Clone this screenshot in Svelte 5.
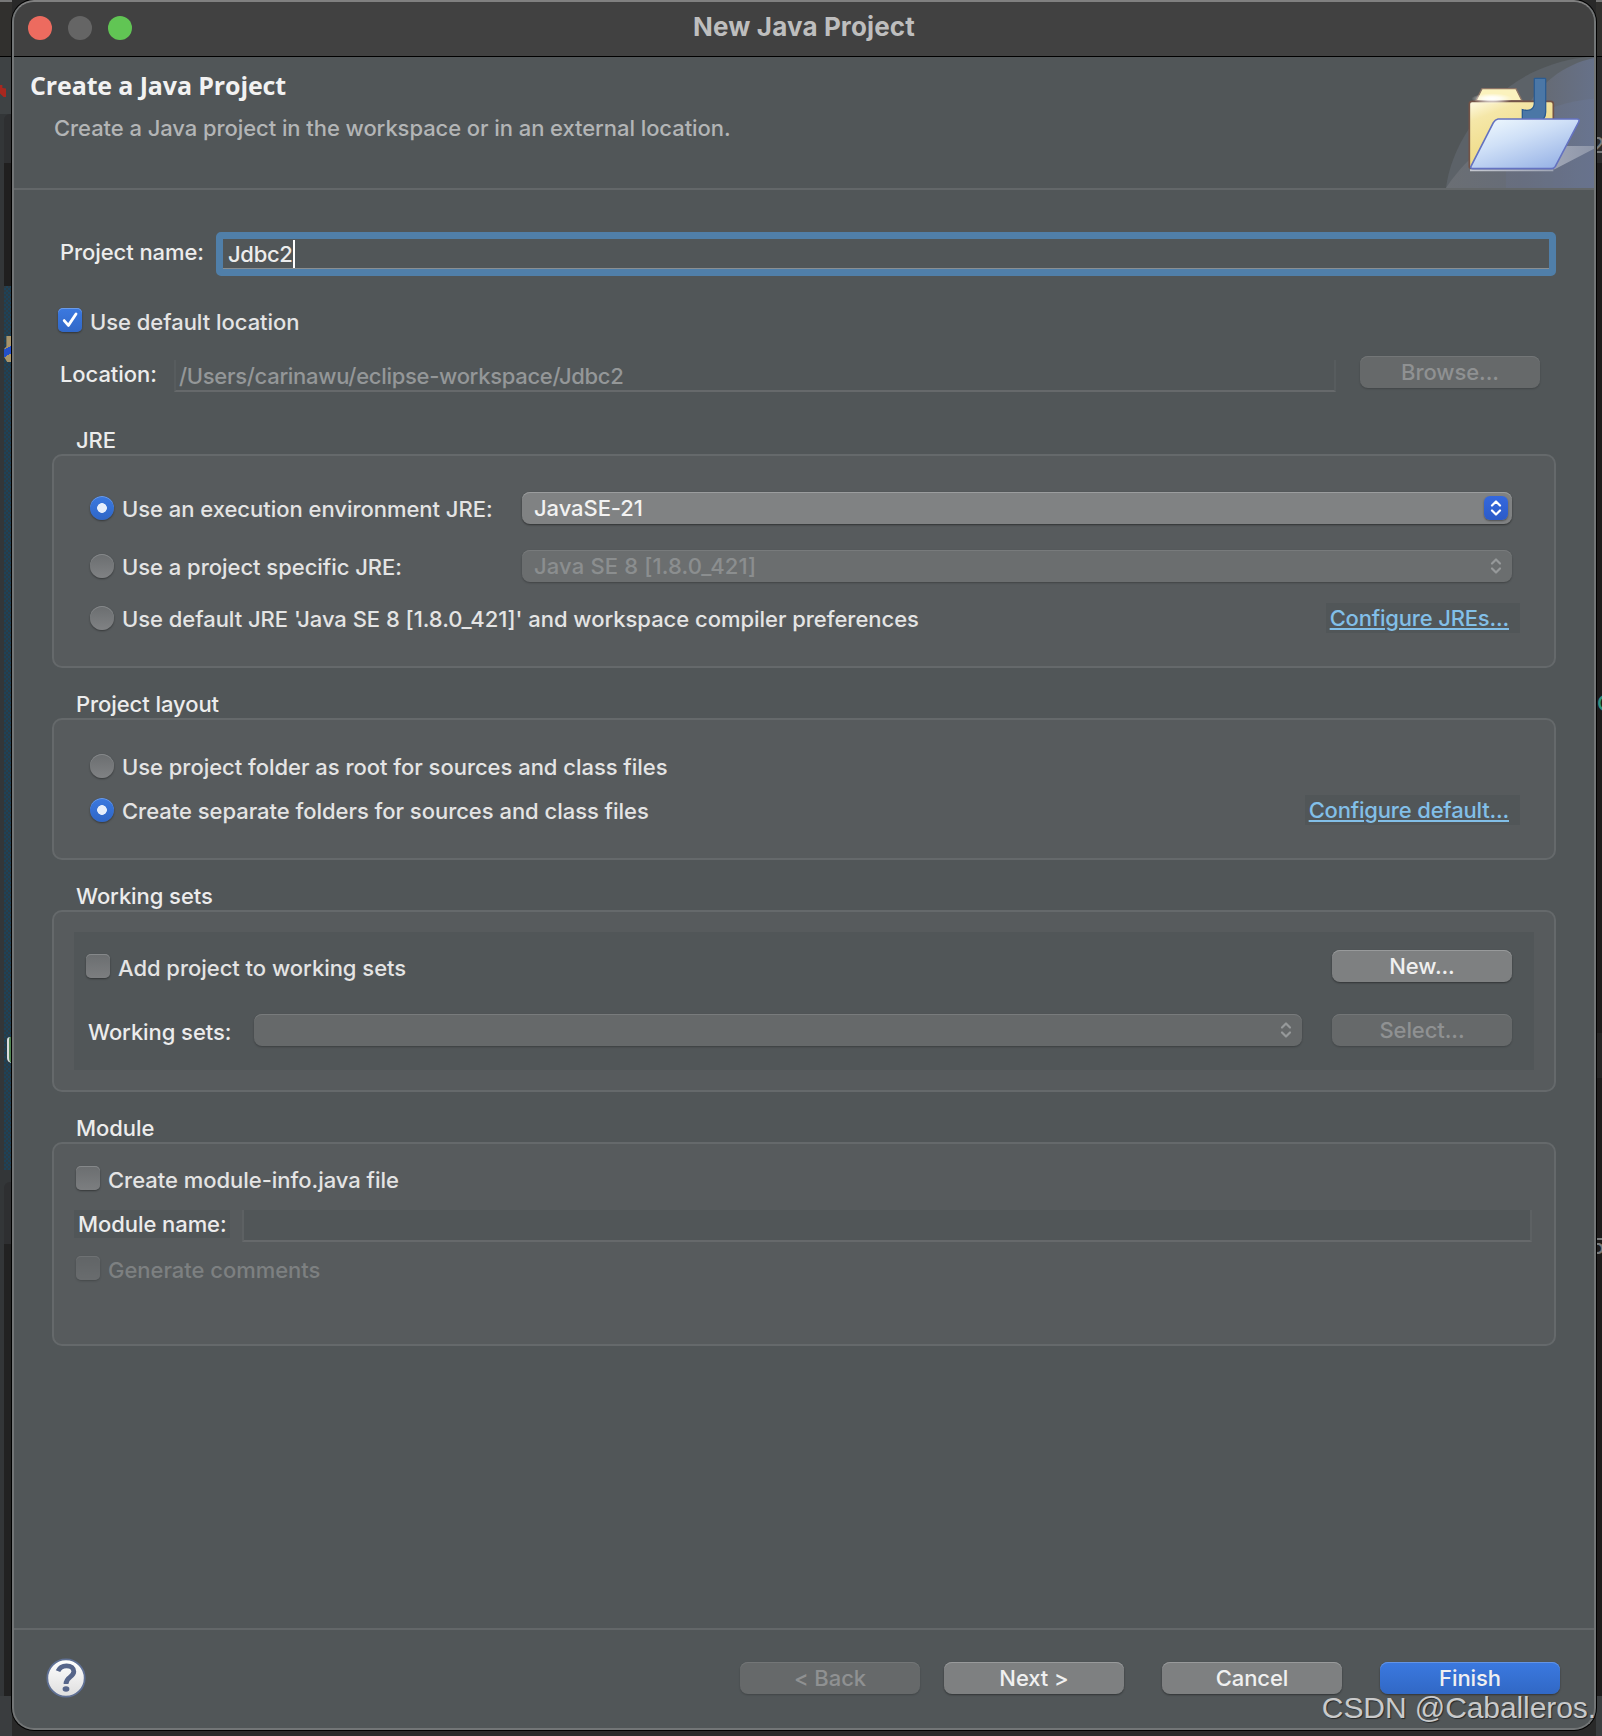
<script>
  let projectName = 'Jdbc2';
  let jre = 'environment';
  let layout = 'separate';

  $: location = '/Users/carinawu/eclipse-workspace/' + projectName;
</script>

<div class="desktop">
  <div class="behind left">
    <div class="piece bar"></div>
    <div class="piece tools"><span class="red-mark"></span></div>
    <div class="piece tab"></div>
    <div class="piece dark"></div>
    <div class="piece tree">
      <span class="mark person"></span>
      <span class="mark leaf"></span>
    </div>
    <div class="piece tab low"></div>
    <div class="piece console"></div>
    <div class="piece rest"></div>
  </div>

  <div class="window">
    <div class="titlebar">
      <div class="lights">
        <span class="light close"></span>
        <span class="light minimize"></span>
        <span class="light zoom"></span>
      </div>
      <span class="title">New Java Project</span>
    </div>

    <header>
      <div class="heading">
        <h1>Create a Java Project</h1>
        <p>Create a Java project in the workspace or in an external location.</p>
      </div>
      <svg class="banner" viewBox="78 51 444 393">
        <defs>
          <linearGradient id="sky" x1="0" x2="1" y1="0" y2="0">
            <stop offset="0" stop-color="#6d7176" />
            <stop offset="0.5" stop-color="#686e7b" />
            <stop offset="1" stop-color="#697591" />
          </linearGradient>
          <linearGradient id="back" x1="0" x2="0.5" y1="0" y2="1">
            <stop offset="0" stop-color="#fffbe6" />
            <stop offset="0.25" stop-color="#f5e7a8" />
            <stop offset="1" stop-color="#ecd678" />
          </linearGradient>
          <linearGradient id="front" x1="0" x2="0.75" y1="0" y2="1">
            <stop offset="0" stop-color="#f4fcff" />
            <stop offset="0.45" stop-color="#cfe0f7" />
            <stop offset="1" stop-color="#98b3e6" />
          </linearGradient>
          <linearGradient id="beam" x1="0" x2="1" y1="0" y2="0">
            <stop offset="0" stop-color="#c5c8d0" />
            <stop offset="1" stop-color="#8d95a8" />
          </linearGradient>
          <radialGradient id="glow">
            <stop offset="0" stop-color="#fff" />
            <stop offset="0.4" stop-color="#fff" stop-opacity="0.8" />
            <stop offset="1" stop-color="#fff" stop-opacity="0" />
          </radialGradient>
        </defs>
        <path d="M78 444C96 290 240 80 500 51H522V444Z" fill="#5c6268" />
        <path d="M258 444C256 260 350 90 522 54V444Z" fill="url(#sky)" opacity="0.8" />
        <path d="M78 444C150 330 330 190 522 176V444Z" fill="url(#sky)" opacity="0.85" />
        <path d="M258 444V390L522 320V444Z" fill="#66708a" opacity="0.35" />
        <path d="M400 318H522V326L404 388H150V394H400Z" fill="url(#beam)" />
        <path d="M168 182L186 146H288L306 182Z" fill="#fbf2bd" stroke="#8c7466" stroke-width="4" />
        <path d="M148 380V192Q148 184 156 184H392Q400 184 400 192V300L300 384H154Q148 384 148 380Z" fill="url(#back)" stroke="#735347" stroke-width="5" />
        <ellipse cx="216" cy="176" rx="62" ry="16" fill="url(#glow)" />
        <path d="M343 117Q343 115 345 115H375Q377 115 377 117V216Q377 238 356 246H307V209Q322 213 332 209Q343 203 343 190Z" fill="#4b77a6" stroke="#2b5c92" stroke-width="4" />
        <path d="M234 237H472Q480 238 476 246L406 379Q402 386 394 386H158Q149 385 154 377L220 248Q226 238 234 237Z" fill="url(#front)" stroke="#6472c0" stroke-width="5" />
      </svg>
    </header>

    <main>
      <div class="row name-row">
        <label for="name">Project name:</label>
        <div class="input focused" id="name"><span>{projectName}</span><i class="caret"></i></div>
      </div>

      <div class="row default-row">
        <span class="check on">
          <svg viewBox="0 0 24 24"><path d="M6.2 12.6L10.4 17.4L18 6" /></svg>
        </span>
        <span class="text">Use default location</span>
      </div>

      <div class="row location-row">
        <span class="label">Location:</span>
        <div class="input flat">{location}</div>
        <button class="disabled">Browse...</button>
      </div>

      <h2>JRE</h2>
      <section class="group jre">
        <div class="row">
          <span class="radio" class:on={jre === 'environment'}></span>
          <span class="text">Use an execution environment JRE:</span>
          <div class="select enabled">
            <span>JavaSE-21</span>
            <span class="step"><svg viewBox="0 0 24 24"><path d="M8 9.5L12 5.5L16 9.5M8 14.5L12 18.5L16 14.5" /></svg></span>
          </div>
        </div>
        <div class="row second">
          <span class="radio" class:on={jre === 'project'}></span>
          <span class="text">Use a project specific JRE:</span>
          <div class="select">
            <span>Java SE 8 [1.8.0_421]</span>
            <span class="step"><svg viewBox="0 0 24 24"><path d="M8 9.5L12 5.5L16 9.5M8 14.5L12 18.5L16 14.5" /></svg></span>
          </div>
        </div>
        <div class="row third">
          <span class="radio" class:on={jre === 'default'}></span>
          <span class="text">Use default JRE 'Java SE 8 [1.8.0_421]' and workspace compiler preferences</span>
          <a href="#jres">Configure JREs...</a>
        </div>
      </section>

      <h2>Project layout</h2>
      <section class="group layout">
        <div class="row">
          <span class="radio" class:on={layout === 'root'}></span>
          <span class="text">Use project folder as root for sources and class files</span>
        </div>
        <div class="row">
          <span class="radio" class:on={layout === 'separate'}></span>
          <span class="text">Create separate folders for sources and class files</span>
          <a href="#default">Configure default...</a>
        </div>
      </section>

      <h2>Working sets</h2>
      <section class="group sets">
        <div class="panel">
          <div class="row">
            <span class="check"></span>
            <span class="text">Add project to working sets</span>
            <button>New...</button>
          </div>
          <div class="row sets-row">
            <span class="label">Working sets:</span>
            <div class="select">
              <span></span>
              <span class="step"><svg viewBox="0 0 24 24"><path d="M8 9.5L12 5.5L16 9.5M8 14.5L12 18.5L16 14.5" /></svg></span>
            </div>
            <button class="disabled">Select...</button>
          </div>
        </div>
      </section>

      <h2>Module</h2>
      <section class="group module">
        <div class="row">
          <span class="check"></span>
          <span class="text">Create module-info.java file</span>
        </div>
        <div class="row module-name">
          <span class="tag">Module name:</span>
          <div class="input flat"></div>
        </div>
        <div class="row faded">
          <span class="check"></span>
          <span class="text">Generate comments</span>
        </div>
      </section>
    </main>

    <footer>
      <svg class="help" viewBox="0 0 40 40">
        <defs>
          <linearGradient id="disc" x1="0" x2="0" y1="0" y2="1">
            <stop offset="0" stop-color="#ffffff" />
            <stop offset="1" stop-color="#dedede" />
          </linearGradient>
        </defs>
        <circle cx="20" cy="20" r="18.7" fill="url(#disc)" stroke="#5f7094" stroke-width="1.8" />
        <path d="M12 13.2C13.5 9.5 17 7.8 20.5 7.8C25 7.8 27.8 10.3 27.8 13.6C27.8 19.4 20 18.4 20 26" fill="none" stroke="#56658a" stroke-width="4.8" />
        <ellipse cx="20" cy="31" rx="3.4" ry="2.8" fill="#56658a" />
      </svg>
      <div class="buttons">
        <button class="disabled">&lt; Back</button>
        <button>Next &gt;</button>
        <button class="cancel">Cancel</button>
        <button class="primary">Finish</button>
      </div>
    </footer>
  </div>

  <div class="behind right">
    <div class="piece bar"></div>
    <div class="piece edge"><span class="glyph">2</span></div>
    <div class="piece editor"><span class="glyph teal">C</span></div>
    <div class="piece gap"></div>
    <div class="piece output"><span class="glyph">5</span></div>
    <div class="piece rest"></div>
  </div>

  <span class="watermark">CSDN @Caballeros.</span>
</div>

<style>
  :global(body) {
    background: #292929;
  }

  .desktop {
    position: relative;
    display: flex;
    width: 1602px;
    height: 1736px;
    overflow: hidden;
    background: #292929;
    color: #ececec;
    font-family: Inter, 'Liberation Sans', sans-serif;
    font-size: 22px;
    font-weight: 500;
    line-height: 28px;
    letter-spacing: -0.07px;
    white-space: nowrap;
  }

  .desktop * {
    box-sizing: border-box;
  }

  /* strips of the workbench on both sides of the dialog */
  .behind {
    display: flex;
    flex-direction: column;
    flex: none;
  }

  .left {
    width: 12px;
    background: #333638;
  }

  .right {
    width: 6px;
    background: #1e1c1c;
  }

  .piece {
    flex: none;
    margin-left: 4px;
  }

  .piece.bar {
    height: 57px;
    margin: 0;
    border-top: 2px solid #777;
    border-bottom: 1px solid #000;
    background: #31302e;
  }

  .tools {
    height: 57px;
    margin: 0;
    padding-top: 28px;
    background: #3e4244;
  }

  .red-mark {
    display: block;
    width: 6px;
    height: 12px;
    background: #a8281f;
    clip-path: polygon(0 0, 40% 0, 40% 25%, 100% 30%, 100% 100%, 60% 100%, 0 70%);
  }

  .tab {
    height: 49px;
    background: #2e2f31;
    border-radius: 6px 0 0 0;
  }

  .dark {
    height: 123px;
    background: #201f1f;
  }

  .tree {
    height: 884px;
    padding-top: 50px;
    background: repeating-conic-gradient(#1e4258 0 25%, #2b3b44 0 50%) 0 0 / 4px 4px;
  }

  .mark {
    display: block;
    width: 8px;
  }

  .person {
    height: 26px;
    background: linear-gradient(150deg, #a8946a 0 45%, #2450c8 45% 70%, #a8946a 70%);
    clip-path: polygon(30% 0, 100% 0, 100% 100%, 40% 100%, 0 80%, 0 50%, 30% 40%);
  }

  .leaf {
    width: 5px;
    height: 26px;
    margin: 675px 0 0 3px;
    border-left: 2px solid #ddd;
    border-radius: 8px 0 0 12px;
    background: #4d8250;
  }

  .tab.low {
    height: 62px;
    margin-top: 12px;
  }

  .console {
    height: 452px;
    background: #222;
  }

  .rest {
    flex: 1;
    margin: 0;
    background: #3a3d3f;
  }

  .right .piece {
    margin: 0;
    overflow: hidden;
  }

  .glyph {
    display: block;
    margin-left: -5px;
    color: #77797a;
  }

  .glyph.teal {
    margin-left: 1px;
    color: #2f9480;
  }

  .edge {
    height: 106px;
    padding-top: 74px;
    background: #2b2b2c;
  }

  .editor {
    height: 870px;
    padding-top: 526px;
  }

  .gap {
    height: 45px;
    background: #262525;
  }

  .output {
    height: 618px;
    padding-top: 154px;
  }

  .window {
    z-index: 1;
    display: flex;
    flex-direction: column;
    flex: none;
    width: 1584px;
    height: 1730px;
    overflow: hidden;
    border: 2px solid #727576;
    border-top-color: #808080;
    border-radius: 22px;
    background: #515658;
    box-shadow: 0 0 0 1px #000;
  }

  .titlebar {
    display: grid;
    grid-template-columns: 200px 1fr 200px;
    flex: none;
    height: 55px;
    border-bottom: 1px solid #000;
    background: #414141;
  }

  .lights {
    display: flex;
    gap: 16px;
    padding: 14px 0 0 14px;
  }

  .light {
    width: 24px;
    height: 24px;
    border-radius: 50%;
  }

  .close {
    background: #ed6b5f;
  }

  .minimize {
    background: #656565;
  }

  .zoom {
    background: #61c554;
  }

  .title {
    padding-top: 11px;
    color: #bebebe;
    font-size: 26px;
    font-weight: 700;
    letter-spacing: 0.13px;
    text-align: center;
  }

  header {
    display: flex;
    justify-content: space-between;
    flex: none;
    height: 133px;
    border-bottom: 2px solid #636769;
  }

  .heading {
    padding: 12px 0 0 16px;
  }

  h1 {
    margin: 0;
    color: #f2f2f2;
    font: 700 25px/32px 'Open Sans', sans-serif;
    letter-spacing: -0.13px;
  }

  p {
    margin: 13px 0 0 24px;
    color: #b3b5b6;
  }

  .banner {
    width: 148px;
    height: 131px;
  }

  main {
    flex: 1;
    padding: 42px 38px 0;
  }

  .row {
    display: flex;
    align-items: center;
  }

  .name-row {
    height: 44px;
    padding-left: 8px;
  }

  .name-row label {
    width: 156px;
    padding-bottom: 4px;
  }

  .input {
    display: flex;
    align-items: center;
    flex: 1;
  }

  .focused {
    height: 44px;
    padding-left: 5px;
    border: 7px solid #507fa9;
    border-radius: 5px;
    box-shadow: inset 0 -1px #8a8f92;
    letter-spacing: -0.3px;
  }

  .caret {
    width: 2px;
    height: 28px;
    background: #fff;
  }

  .default-row {
    height: 24px;
    margin-top: 32px;
    padding-left: 6px;
  }

  .text {
    position: relative;
    top: 1px;
    padding-left: 8px;
    color: #e4e4e4;
    letter-spacing: -0.03px;
  }

  .check {
    flex: none;
    width: 24px;
    height: 24px;
    border-radius: 5px;
    background: linear-gradient(#6b6e70, #7c7e80);
    box-shadow: inset 0 1px #85888a, 0 1px 2px #0006;
  }

  .check + .text {
    top: 2px;
  }

  .check.on {
    background: linear-gradient(#3b79e0, #3168c8);
    box-shadow: inset 0 1px #6b9be8, 0 1px 2px #0006;
  }

  .check svg {
    display: block;
    fill: none;
    stroke: #fff;
    stroke-width: 2.8;
    stroke-linecap: round;
    stroke-linejoin: round;
  }

  .location-row {
    height: 36px;
    margin-top: 24px;
    padding: 0 16px 0 8px;
    align-items: flex-start;
  }

  .location-row .label {
    width: 114px;
    padding-top: 4px;
  }

  .flat {
    height: 32px;
    border: solid #5d6163;
    border-width: 0 2px 2px;
    border-bottom-color: #66696b;
    background: #515658;
    color: #949798;
  }

  .location-row .flat {
    margin: 4px 24px 0 0;
    padding: 2px 0 0 3px;
    border-color: #66696b #575c5e;
    letter-spacing: -0.3px;
  }

  button {
    flex: none;
    width: 180px;
    height: 32px;
    padding: 0;
    border: 0;
    border-radius: 8px;
    background: #7e8081;
    box-shadow: inset 0 1px #989a9b, 0 1px 2px #0006;
    color: #f0f0f0;
    font: inherit;
    line-height: 24px;
    letter-spacing: inherit;
  }

  .disabled {
    background: #66696a;
    box-shadow: inset 0 1px #737677, 0 1px 2px #0003;
    color: #8f9192;
  }

  .primary {
    background: linear-gradient(#3b79e0, #3168c5);
    box-shadow: inset 0 1px #6394e6, 0 1px 2px #0006;
  }

  h2 {
    height: 28px;
    margin: 22px 0 0 24px;
    font: inherit;
  }

  .location-row + h2 {
    margin-top: 34px;
  }

  .group {
    border: 2px solid #65696b;
    border-radius: 10px;
    background: #575b5d;
  }

  .jre {
    height: 214px;
    padding: 36px 42px 0 36px;
  }

  .jre .row {
    height: 32px;
  }

  .jre .second {
    margin-top: 26px;
  }

  .jre .second .select {
    letter-spacing: 0.15px;
  }

  .jre .third {
    margin: 20px -8px 0 0;
  }

  .radio {
    flex: none;
    width: 24px;
    height: 24px;
    border-radius: 50%;
    background: linear-gradient(#6b6e70, #808284);
    box-shadow: inset 0 1px #85888a, 0 1px 2px #0006;
  }

  .radio.on {
    background:
      radial-gradient(circle, #e6eefb 0 4.5px, transparent 5.2px),
      linear-gradient(#3b79e0, #2f66c6);
    box-shadow: inset 0 1px #6b9be8, 0 1px 2px #0006;
  }

  .select {
    display: flex;
    align-items: center;
    justify-content: space-between;
    height: 32px;
    padding: 0 4px 0 12px;
    border-radius: 8px;
    background: #6b6e6f;
    box-shadow: inset 0 1px #787b7c, 0 1px 2px #0004;
    color: #8b8e8f;
  }

  .jre .select {
    width: 990px;
    margin-left: auto;
  }

  .jre .enabled {
    background: #808283;
    box-shadow: inset 0 1px #9b9d9e, 0 1px 2px #0007;
    color: #f2f2f2;
  }

  .step {
    width: 24px;
    height: 24px;
    border-radius: 6px;
  }

  .step svg {
    display: block;
    fill: none;
    stroke: #96999a;
    stroke-width: 2.2;
    stroke-linecap: round;
    stroke-linejoin: round;
  }

  .enabled .step {
    background: linear-gradient(#3468de, #2c5bc8);
    box-shadow: 0 1px 2px #0006;
  }

  .enabled .step svg {
    stroke: #fff;
  }

  a {
    height: 30px;
    margin-left: auto;
    padding: 0 11px 0 4px;
    background: #515658;
    color: #82bfe8;
    line-height: 30px;
    letter-spacing: -0.18px;
    text-underline-offset: 2px;
    text-decoration-thickness: 2px;
  }

  .layout {
    height: 142px;
    padding: 32px 42px 0 36px;
  }

  .layout .row {
    height: 28px;
    margin: 0 -8px 16px 0;
  }

  .sets {
    height: 182px;
    padding: 20px;
  }

  .panel {
    height: 138px;
    padding: 18px 22px 0 12px;
    background: #515658;
  }

  .panel button {
    margin-left: auto;
  }

  .sets-row {
    margin-top: 32px;
    padding-left: 2px;
  }

  .sets-row .label {
    width: 166px;
    padding-top: 4px;
  }

  .sets-row .select {
    width: 1048px;
    background: #66696a;
  }

  .module {
    height: 204px;
    padding: 22px 22px 0 20px;
  }

  .module .row {
    height: 24px;
    padding-left: 2px;
  }

  .module .module-name {
    height: 32px;
    margin: 20px 0 14px;
    padding: 0;
    align-items: flex-start;
  }

  .tag {
    width: 156px;
    height: 28px;
    margin-right: 12px;
    padding-left: 4px;
    background: #515658;
  }

  .faded .check {
    opacity: 0.5;
  }

  .faded .text {
    color: #7d8081;
  }

  footer {
    display: flex;
    justify-content: space-between;
    flex: none;
    height: 100px;
    padding: 28px 34px 0 32px;
    border-top: 2px solid #636769;
  }

  .help {
    width: 40px;
    height: 40px;
  }

  .buttons {
    display: flex;
    gap: 24px;
    padding-top: 4px;
  }

  .cancel {
    margin: 0 14px;
  }

  /* stamp lying over the corner of the dialog */
  .watermark {
    position: absolute;
    z-index: 2;
    right: 6px;
    bottom: 14px;
    color: #c9cacb;
    font: 30px/28px 'Liberation Sans', sans-serif;
    letter-spacing: -0.08px;
    text-shadow: 1px 1px 1px #0008;
  }
</style>
